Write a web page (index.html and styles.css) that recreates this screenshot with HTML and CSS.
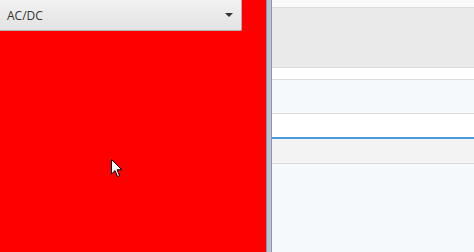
FILE: index.html
```html
<!DOCTYPE html>
<html lang="en">
<head>
    <meta charset="UTF-8">
    <title>Split View</title>
    <link rel="stylesheet" href="styles.css">
</head>
<body>
    <div class="app">
        <div class="left-pane">
            <div class="combo">
                <span class="combo-text">AC/DC</span>
                <span class="combo-arrow"></span>
            </div>
            <div class="cursor">
                <svg width="12" height="19" viewBox="0 0 12 19">
                    <path d="M0.5 0.5 L0.5 15 L4 11.6 L6.6 17.6 L8.6 16.7 L6 10.8 L10.8 10.8 Z" fill="#fff" stroke="#000" stroke-width="1"/>
                </svg>
            </div>
        </div>
        <div class="splitter"></div>
        <div class="right-pane">
            <div class="row row-top"></div>
            <div class="row row-header"></div>
            <div class="row row-white"></div>
            <div class="row row-alt"></div>
            <div class="row row-selected"></div>
            <div class="row row-gray"></div>
            <div class="row row-rest"></div>
        </div>
    </div>
</body>
</html>
```

FILE: styles.css
```css
html, body {
    margin: 0;
    height: 100%;
}
body {
    font-family: "Open Sans", "DejaVu Sans", sans-serif;
    overflow: hidden;
}
.app {
    display: flex;
    height: 252px;
}
.left-pane {
    position: relative;
    width: 266px;
    background: #ff0000;
}
.combo {
    display: flex;
    align-items: center;
    justify-content: space-between;
    width: 242px;
    height: 31px;
    box-sizing: border-box;
    padding: 0 8px 0 7px;
    background: linear-gradient(#f2f2f2, #e3e3e3);
    border-bottom: 1px solid #b0b0b0;
    border-right: 1px solid #b0b0b0;
    border-bottom-right-radius: 2px;
}
.combo-text {
    font-size: 12px;
    color: #333;
}
.combo-arrow {
    width: 0;
    height: 0;
    border-left: 4px solid transparent;
    border-right: 4px solid transparent;
    border-top: 4px solid #333;
}
.cursor {
    position: absolute;
    left: 111px;
    top: 159px;
    line-height: 0;
}
.splitter {
    width: 4px;
    background: #b7c3da;
    border-left: 1px solid #8a92a4;
    border-right: 1px solid #8e97aa;
}
.right-pane {
    flex: 1;
    display: flex;
    flex-direction: column;
    background: #f5f9fc;
}
.row {
    flex: none;
    border-bottom: 1px solid #dcdcdc;
}
.row-top {
    height: 7px;
    background: #fafafa;
}
.row-header {
    height: 59px;
    background: #eaeaea;
}
.row-white {
    height: 11px;
    background: #ffffff;
}
.row-alt {
    height: 33px;
    background: #f5f9fc;
}
.row-selected {
    height: 23px;
    background: #ffffff;
    border-bottom: 2px solid #4b9bd8;
}
.row-gray {
    height: 24px;
    background: #f3f3f3;
}
.row-rest {
    flex: 1;
    border-bottom: none;
    background: #f5f9fc;
}
```
